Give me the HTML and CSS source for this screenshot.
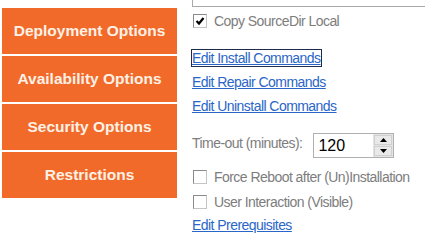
FILE: index.html
```html
<!DOCTYPE html>
<html lang="en">

<head>
  <meta charset="UTF-8">
  <title>Package Options</title>
  <link rel="stylesheet" href="styles.css">
</head>

<body>

  <div class="page">

    <div class="menu">
      <div class="menuBtn">Deployment Options</div>
      <div class="menuBtn">Availability Options</div>
      <div class="menuBtn">Security Options</div>
      <div class="menuBtn">Restrictions</div>
    </div>

    <div class="panel">
      <div class="topBox"></div>

      <label class="checkRow first">
        <span class="box">
          <svg width="10" height="10" viewBox="0 0 10 10">
            <path d="M1.5 5 L4 7.5 L8.5 2" fill="none" stroke="black" stroke-width="2.2"/>
          </svg>
        </span>
        <span>Copy SourceDir Local</span>
      </label>

      <div class="links">
        <a class="link focused" href="#">Edit Install Commands</a>
        <a class="link" href="#">Edit Repair Commands</a>
        <a class="link" href="#">Edit Uninstall Commands</a>
      </div>

      <div class="timeRow">
        <span class="timeLabel">Time-out (minutes):</span>
        <div class="spin">
          <span class="spinValue">120</span>
          <div class="spinBtns">
            <span class="spinBtn">
              <svg width="7" height="4" viewBox="0 0 7 4"><path d="M0 4 L3.5 0 L7 4 Z" fill="black"/></svg>
            </span>
            <span class="spinBtn">
              <svg width="7" height="4" viewBox="0 0 7 4"><path d="M0 0 L3.5 4 L7 0 Z" fill="black"/></svg>
            </span>
          </div>
        </div>
      </div>

      <label class="checkRow reboot">
        <span class="box"></span>
        <span>Force Reboot after (Un)Installation</span>
      </label>
      <label class="checkRow">
        <span class="box"></span>
        <span>User Interaction (Visible)</span>
      </label>

      <a class="link last" href="#">Edit Prerequisites</a>
    </div>

  </div>

</body>

</html>
```

FILE: styles.css
```css
body {
  margin: 0;
  background-color: white;
  font-family: "Liberation Sans", Arial, sans-serif;
}

.page {
  display: flex;
  gap: 15px;
}

/* left menu */
.menu {
  display: flex;
  flex-direction: column;
  gap: 2px;
  margin-top: 8px;
  margin-left: 2px;
  width: 175px;
  flex-shrink: 0;
}

.menuBtn {
  height: 46px;
  display: flex;
  align-items: center;
  justify-content: center;
  background-color: #f26a2a;
  color: #fdf1e6;
  font-size: 15.5px;
  font-weight: bold;
}

/* right panel */
.panel {
  flex: 1;
  display: flex;
  flex-direction: column;
  font-size: 14px;
  letter-spacing: -0.55px;
  color: #7d7d7d;
  white-space: nowrap;
}

.topBox {
  height: 7px;
  margin-right: -10px;
  border: 1px solid #a8a8a8;
  border-top: none;
  box-sizing: border-box;
}

.checkRow {
  display: flex;
  align-items: center;
  gap: 7px;
  height: 25px;
}

.first {
  margin-top: 2px;
  height: 24px;
}

.box {
  width: 12px;
  height: 12px;
  margin-left: 1px;
  border: 1px solid #c4c4c4;
  border-top-color: #8a8a8a;
  border-left-color: #8a8a8a;
  display: flex;
  align-items: center;
  justify-content: center;
  background-color: white;
}

.links {
  display: flex;
  flex-direction: column;
  gap: 8px;
  margin-top: 17px;
}

.link {
  color: #2a66c8;
  align-self: flex-start;
  line-height: 16px;
}

.focused {
  outline: 1px solid #1e2b4a;
}

.timeRow {
  display: flex;
  align-items: flex-start;
  gap: 11px;
  height: 25px;
  margin-top: 19px;
}

.timeLabel {
  margin-top: 2px;
}

.spin {
  display: flex;
  height: 25px;
  border: 1px solid #b0b0b0;
  box-sizing: border-box;
  background-color: #e4e4e4;
}

.spinValue {
  width: 55px;
  padding-left: 4px;
  background-color: white;
  color: black;
  font-size: 16px;
  letter-spacing: 0;
  line-height: 23px;
}

.spinBtns {
  display: flex;
  flex-direction: column;
  gap: 1px;
  width: 20px;
  padding: 1px;
  box-sizing: border-box;
}

.spinBtn {
  flex: 1;
  display: flex;
  align-items: center;
  justify-content: center;
  background-color: #e9e9e9;
  border: 1px solid #d0d0d0;
}

.reboot {
  margin-top: 6px;
}

.last {
  margin-top: 3px;
}
```
